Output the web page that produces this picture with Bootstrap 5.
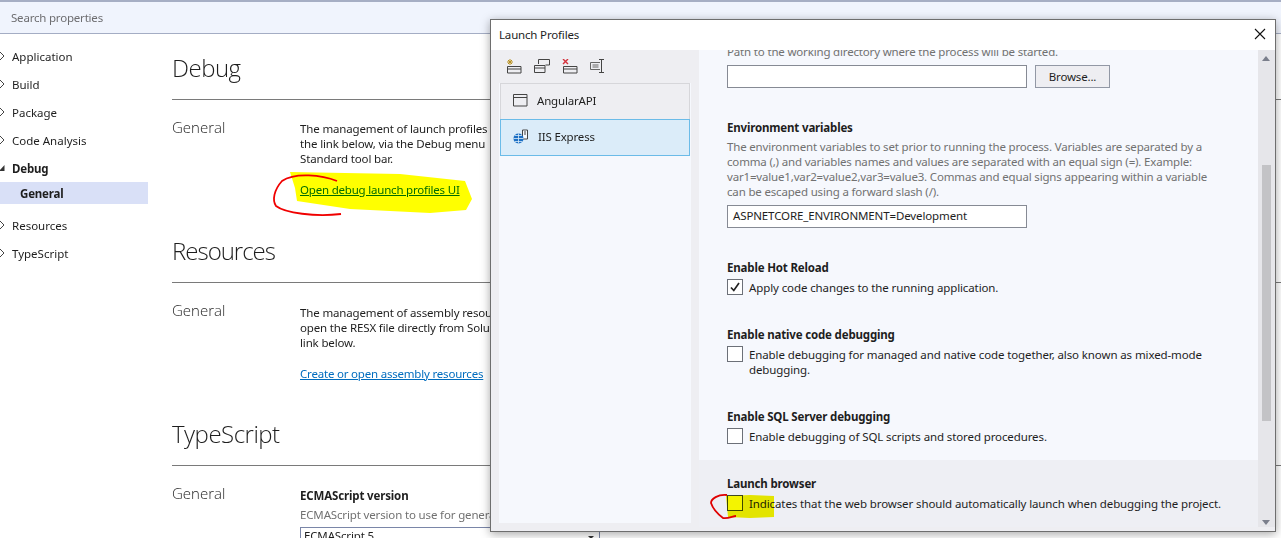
<!DOCTYPE html>
<html lang="en"><head><meta charset="utf-8"><title>Launch Profiles</title>
<link href="https://cdn.jsdelivr.net/npm/bootstrap@5.3.0/dist/css/bootstrap.min.css" rel="stylesheet">
<style>
html,body{height:538px;overflow:hidden;background:#fff}
body{font-family:"Noto Sans","Open Sans",sans-serif;font-size:11.5px;line-height:15px;color:#1e1e1e;position:relative}
.page-top{height:2px;background:#a6aec4}
.search-bar{height:32px;background:#f0f4fd;border-bottom:1px solid #a4adc4;color:#6d6d70;padding-left:11px;display:flex;align-items:center;letter-spacing:-.2px}
.page-body{height:504px;overflow:hidden}
.side{width:148px;flex:none;padding-top:8px}
.side-item{height:28px;display:flex;align-items:center;padding-left:12px;position:relative}
.side-item svg{position:absolute;left:-1px;top:9px}
.side-item.open{font-weight:700;letter-spacing:-.2px}
.side-sub{height:22px;margin-bottom:7px;background:#d9e0f7;padding-left:20px;display:flex;align-items:center;font-weight:700;letter-spacing:-.2px}
.main{flex:1;padding-left:24px;min-width:0;letter-spacing:-.15px}
.sec-title{font-size:24px;line-height:32px;font-weight:300;color:#1e1e1e;padding-top:18px;padding-bottom:15px;border-bottom:1px solid #7a7a7a;font-family:"Open Sans",sans-serif;margin:0;letter-spacing:-.5px}
.title-tight{letter-spacing:-1px}
.sec-row{display:flex;padding-top:18px}
.sec-label{width:128px;flex:none;font-size:15px;line-height:20px;font-weight:300;font-family:"Open Sans",sans-serif;margin-top:-1px;letter-spacing:0}
.sec-text{width:560px;flex:none;padding-top:3px}
.res-text{padding-top:4px}
.sec-h{height:183px}
.main a{color:#006cbe;letter-spacing:-.2px}
.pick{width:300px;height:20px;border:1px solid #7a86a8;margin-top:5px;padding-left:3px;white-space:nowrap;position:relative}
.pick::after{content:"";position:absolute;right:5px;top:8px;border-left:3px solid transparent;border-right:3px solid transparent;border-top:3px solid #333}
.strong-t{font-weight:700}
.muted-t{color:#717171}
.dlg{position:absolute;left:490px;top:19px;width:786px;height:513px;background:#eeeef2;border:1px solid #6e6e6e;box-shadow:0 2px 9px rgba(0,0,0,.35);display:flex;flex-direction:column;letter-spacing:-.17px}
.dlg-head{height:30px;flex:none;background:#fff;display:flex;align-items:center;justify-content:space-between;padding:0 9px 2px 8px}
.dlg-body{flex:1;display:flex;min-height:0;padding-bottom:4px}
.dlg-left{width:208px;flex:none;padding:0 8px 4px;display:flex;flex-direction:column}
.tools{height:33px;display:flex;align-items:center;gap:12px;padding-left:7px}
.prof-list{background:#f6f8fd;flex:1}
.prof{height:37px;margin:0 1px -1px;border:1px solid #d6d6da;background:#eeeef2;display:flex;align-items:center;padding:0 0 2px 12px;gap:9px;position:relative}
.prof.sel{background:#dbecf9;border-color:#6bbbe8}
.prof svg{flex:none}
.dlg-right{flex:1;background:#f6f8fd;min-width:0;overflow:hidden}
.blk{padding-left:28px;padding-right:20px}
.blk p{margin:0}
.first-t{margin-top:-6px!important}
.path-row{margin-top:6px}
.fld{width:300px;height:23px;background:#fff;border:1px solid #868a94;padding-left:5px;line-height:20px;letter-spacing:-.13px}
.brow{width:75px;height:23px;background:#eeeef2;border:1px solid #9298a5;border-radius:0;padding:0;font-size:11.5px;line-height:20px;color:#1e1e1e;letter-spacing:-.17px}
.chk{width:16px;height:16px;flex:none;border:1px solid #6c7078;background:#fff;display:flex;align-items:center;justify-content:center}
.chk.hi{border-color:#3f4a35}
.lb{display:flex;gap:6px}
.lb span{padding-top:1px;letter-spacing:-.11px}
.hb{background:#eeeff4;padding-top:16px;height:67px;margin-top:16px}
.sbar{width:17px;flex:none;background:#e6e6ea;position:relative}
.thumb{position:absolute;left:4px;right:4px;top:115px;height:256px;background:#c3c3c6}
.arr{position:absolute;left:4px;width:0;height:0;border-left:4px solid transparent;border-right:4px solid transparent}
.arr.up{top:6px;border-bottom:5px solid #7b7f8c}
.arr.dn{bottom:2px;border-top:5px solid #7b7f8c}
.scribble{position:absolute;left:0;top:0;pointer-events:none;mix-blend-mode:multiply}
.under{z-index:1}
.over{z-index:5}
.env-h{margin-top:32px!important}
.env-d{margin-top:4px!important}
.env-f{margin-top:6px}
.gap-a,.gap-b{margin-top:32px}
.mb-head{margin-bottom:4px!important}
</style></head>
<body>
<div class="page-top"></div>
<div class="search-bar">Search properties</div>
<div class="page-body d-flex">
  <nav class="side">
    <div class="side-item"><svg width="6" height="10" viewBox="0 0 6 10"><path d="M1 1l4 4-4 4" fill="none" stroke="#444"/></svg>Application</div>
    <div class="side-item"><svg width="6" height="10" viewBox="0 0 6 10"><path d="M1 1l4 4-4 4" fill="none" stroke="#444"/></svg>Build</div>
    <div class="side-item"><svg width="6" height="10" viewBox="0 0 6 10"><path d="M1 1l4 4-4 4" fill="none" stroke="#444"/></svg>Package</div>
    <div class="side-item"><svg width="6" height="10" viewBox="0 0 6 10"><path d="M1 1l4 4-4 4" fill="none" stroke="#444"/></svg>Code Analysis</div>
    <div class="side-item open"><svg width="6" height="10" viewBox="0 0 6 10"><path d="M5.500 2v6H0z" fill="#333"/></svg>Debug</div>
    <div class="side-sub">General</div>
    <div class="side-item"><svg width="6" height="10" viewBox="0 0 6 10"><path d="M1 1l4 4-4 4" fill="none" stroke="#444"/></svg>Resources</div>
    <div class="side-item"><svg width="6" height="10" viewBox="0 0 6 10"><path d="M1 1l4 4-4 4" fill="none" stroke="#444"/></svg>TypeScript</div>
  </nav>
  <main class="main">
    <div class="sec-h">
      <h2 class="sec-title">Debug</h2>
      <div class="sec-row"><div class="sec-label">General</div>
        <div class="sec-text">The management of launch profiles<br>the link below, via the Debug menu<br>Standard tool bar.
          <div class="mt-3"><a href="#">Open debug launch profiles UI</a></div></div></div>
    </div>
    <div class="sec-h">
      <h2 class="sec-title title-tight">Resources</h2>
      <div class="sec-row"><div class="sec-label">General</div>
        <div class="sec-text res-text">The management of assembly resources<br>open the RESX file directly from Solution<br>link below.
          <div class="mt-3"><a href="#">Create or open assembly resources</a></div></div></div>
    </div>
    <div>
      <h2 class="sec-title">TypeScript</h2>
      <div class="sec-row"><div class="sec-label">General</div>
        <div><div class="strong-t pt-1">ECMAScript version</div>
        <div class="muted-t mt-1 text-nowrap">ECMAScript version to use for generated</div>
        <div class="pick">ECMAScript 5</div></div></div>
    </div>
  </main>
</div>
<svg class="scribble under" width="491" height="538" viewBox="0 0 491 538">
  <path d="M290 172 L345 173 L400 174 L465 181 L472 199 L466 210 L430 213 L350 209 L297 201 L295 188 Z" fill="#ffff00"/>
  <path d="M337 181 C322 175 295 172 282 181 C274 190 272 200 276 206 C285 213 315 217 341 214" fill="none" stroke="#f00000" stroke-width="1.800"/>
</svg>

<section class="dlg over">
  <div class="dlg-head"><span>Launch Profiles</span>
    <svg width="12" height="12" viewBox="0 0 12 12"><path d="M1 1l10 10M11 1L1 11" stroke="#111" stroke-width="1.100"/></svg></div>
  <div class="dlg-body">
    <div class="dlg-left">
      <div class="tools">
        <svg width="16" height="15" viewBox="0 0 16 15"><path d="M4 0v6M1 3h6M2 1l4 4M6 1L2 5" stroke="#b8901e"/><path d="M1.500 7.500h13.500v6.500H1.500zM1.500 10h13.500" fill="none" stroke="#444"/></svg>
        <svg width="16" height="15" viewBox="0 0 16 15"><path d="M4.500 5V.5h11V6h-4" fill="none" stroke="#444"/><path d="M.5 6.500h10.500v7H.5zM.5 9h10.500" fill="none" stroke="#444"/></svg>
        <svg width="16" height="15" viewBox="0 0 16 15"><path d="M1 0l5 5M6 0L1 5" stroke="#d4323c" stroke-width="1.400"/><path d="M1.500 7.500h13.500v6.500H1.500zM1.500 10h13.500" fill="none" stroke="#444"/></svg>
        <svg width="16" height="15" viewBox="0 0 16 15"><path d="M10 3.500H.5v7H10M2.500 6h6M2.500 8h6" fill="none" stroke="#666"/><path d="M9 .5h5M9 13.500h5M11.500 .5v13" stroke="#444" fill="none"/></svg>
      </div>
      <div class="prof-list">
        <div class="prof"><svg width="15" height="13" viewBox="0 0 15 13"><path d="M.5.500h13.500v11.500H.5zM.5 3.500h13.500" fill="none" stroke="#444"/></svg><span>AngularAPI</span></div>
        <div class="prof sel"><svg width="16" height="15" viewBox="0 0 16 15"><path d="M9.500 1h5v9h-5zM11 3h2M11 5h2" fill="#f4f8fc" stroke="#444"/><circle cx="5.500" cy="9.500" r="5" fill="#1c6fc4"/><path d="M.5 9.500h10M5.500 4.500v10M2 6.500h7M2 12.500h7" stroke="#dbecf9" stroke-width=".8"/></svg><span>IIS Express</span></div>
      </div>
    </div>
    <div class="dlg-right">
      <div class="blk">
        <p class="muted-t first-t">Path to the working directory where the process will be started.</p>
        <div class="d-flex gap-2 path-row"><div class="fld"></div><button class="brow" type="button">Browse...</button></div>
      </div>
      <div class="blk">
        <p class="strong-t env-h">Environment variables</p>
        <p class="muted-t env-d">The environment variables to set prior to running the process. Variables are separated by a<br>comma (,) and variables names and values are separated with an equal sign (=). Example:<br>var1=value1,var2=value2,var3=value3. Commas and equal signs appearing within a variable<br>can be escaped using a forward slash (/).</p>
        <div class="fld env-f">ASPNETCORE_ENVIRONMENT=Development</div>
      </div>
      <div class="blk gap-a">
        <p class="strong-t mb-head">Enable Hot Reload</p>
        <div class="lb"><div class="chk"><svg width="12" height="12" viewBox="0 0 12 12"><path d="M2 6.500l2.800 3L10 2" fill="none" stroke="#222" stroke-width="1.700"/></svg></div><span>Apply code changes to the running application.</span></div>
      </div>
      <div class="blk gap-a">
        <p class="strong-t mb-head">Enable native code debugging</p>
        <div class="lb"><div class="chk"></div><span>Enable debugging for managed and native code together, also known as mixed-mode<br>debugging.</span></div>
      </div>
      <div class="blk gap-b">
        <p class="strong-t mb-head">Enable SQL Server debugging</p>
        <div class="lb"><div class="chk"></div><span>Enable debugging of SQL scripts and stored procedures.</span></div>
      </div>
      <div class="blk hb">
        <p class="strong-t mb-head">Launch browser</p>
        <div class="lb"><div class="chk hi"></div><span>Indicates that the web browser should automatically launch when debugging the project.</span></div>
      </div>
    </div>
    <div class="sbar"><div class="arr up"></div><div class="thumb"></div><div class="arr dn"></div></div>
  </div>
</section>
<svg class="scribble over" width="1281" height="538" viewBox="0 0 1281 538">
  <path d="M726 496 L750 495 L774 496 L774 517 L750 518 L728 517 Z" fill="#f4f400"/>
  <path d="M727 495 C718 494 711 499 711 503 C713 509 719 515 723 518 C728 519 733 516 736 516" fill="none" stroke="#f00000" stroke-width="1.800"/>
</svg>
</body></html>
